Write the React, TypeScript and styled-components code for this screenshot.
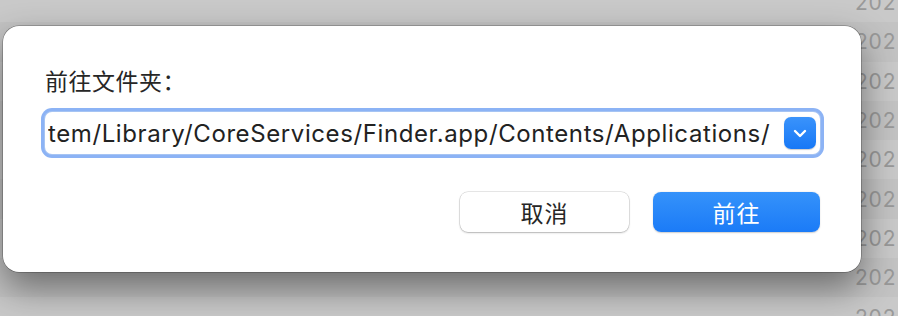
import React, { FC } from 'react';
import styled, { createGlobalStyle } from 'styled-components';

const GlobalStyle = createGlobalStyle`
  html, body {
    margin: 0;
    padding: 0;
    background: #c6c6c6;
  }
  body {
    font-family: "Inter", "Noto Sans CJK SC", sans-serif;
    -webkit-font-smoothing: antialiased;
  }
`;

const cjk = `"Noto Sans CJK SC", "Inter", sans-serif`;

const Screen = styled.div`
  position: relative;
  width: 898px;
  height: 316px;
  overflow: hidden;
  background: #c8c8c8;
`;

const FileList = styled.div`
  display: flex;
  flex-direction: column;
  margin-top: -17px;
`;

const FileRow = styled.div<{ $odd: boolean }>`
  display: flex;
  align-items: center;
  height: 39.3px;
  padding-left: 855px;
  background: ${(p) => (p.$odd ? '#c3c3c3' : '#c9c9c9')};
  color: #999999;
  font-family: "Inter", sans-serif;
  font-size: 21px;
  letter-spacing: 0.8px;
  white-space: nowrap;
`;

const Dialog = styled.div`
  position: absolute;
  left: 3px;
  top: 26px;
  width: 858px;
  height: 246px;
  box-sizing: border-box;
  display: flex;
  flex-direction: column;
  padding: 41px 41px 40px 42px;
  background: #ffffff;
  border-radius: 16px;
  box-shadow: 0 0 0 0.5px rgba(0, 0, 0, 0.4), 0 16px 36px rgba(0, 0, 0, 0.45);
`;

const Title = styled.div`
  font-family: ${cjk};
  font-size: 23px;
  line-height: 26px;
  letter-spacing: 0.5px;
  color: #262626;
  margin-bottom: 19px;
`;

const Field = styled.div`
  display: flex;
  align-items: center;
  height: 42px;
  box-sizing: border-box;
  padding: 0 4px 0 3px;
  background: #fff;
  border-radius: 7px;
  box-shadow: 0 0 0 1px #a6c4f3, 0 0 0 4px #8cb3f5;
`;

const FieldText = styled.div`
  flex: 1;
  overflow: hidden;
  white-space: nowrap;
  font-family: "Inter", sans-serif;
  font-size: 24px;
  letter-spacing: 0.6px;
  color: #222;
`;

const ChevronButton = styled.div`
  display: flex;
  align-items: center;
  justify-content: center;
  width: 32px;
  height: 32px;
  border-radius: 7px;
  background: linear-gradient(#3a93fb, #1778f6);
  box-shadow: 0 0.5px 1px rgba(0, 0, 0, 0.2);
`;

const Actions = styled.div`
  display: flex;
  justify-content: flex-end;
  gap: 24px;
  margin-top: auto;
`;

const Button = styled.button<{ $primary?: boolean }>`
  width: ${(p) => (p.$primary ? '167px' : '169px')};
  height: 40px;
  border: none;
  border-radius: 8px;
  font-family: ${cjk};
  font-size: 23px;
  letter-spacing: 1px;
  padding: 0;
  color: ${(p) => (p.$primary ? '#ffffff' : '#262626')};
  background: ${(p) => (p.$primary ? 'linear-gradient(#3592fa, #1b7bf7)' : '#ffffff')};
  box-shadow: ${(p) =>
    p.$primary
      ? '0 0.5px 1.5px rgba(0, 0, 0, 0.2)'
      : '0 0 0 0.5px rgba(0, 0, 0, 0.18), 0 1px 2px rgba(0, 0, 0, 0.22)'};
`;

const rows = Array.from({ length: 10 }, (_, i) => i);

const App: FC = () => (
  <>
    <GlobalStyle />
    <Screen>
      <FileList>
        {rows.map((i) => (
          <FileRow key={i} $odd={i % 2 === 1}>
            202
          </FileRow>
        ))}
      </FileList>

      <Dialog>
        <Title>前往文件夹：</Title>
        <Field>
          <FieldText>tem/Library/CoreServices/Finder.app/Contents/Applications/</FieldText>
          <ChevronButton>
            <svg width="14" height="9" viewBox="0 0 14 9" fill="none">
              <path d="M2 2l5 5 5-5" stroke="#fff" strokeWidth="2.4" strokeLinecap="round" strokeLinejoin="round" />
            </svg>
          </ChevronButton>
        </Field>
        <Actions>
          <Button>取消</Button>
          <Button $primary>前往</Button>
        </Actions>
      </Dialog>
    </Screen>
  </>
);

export default App;
